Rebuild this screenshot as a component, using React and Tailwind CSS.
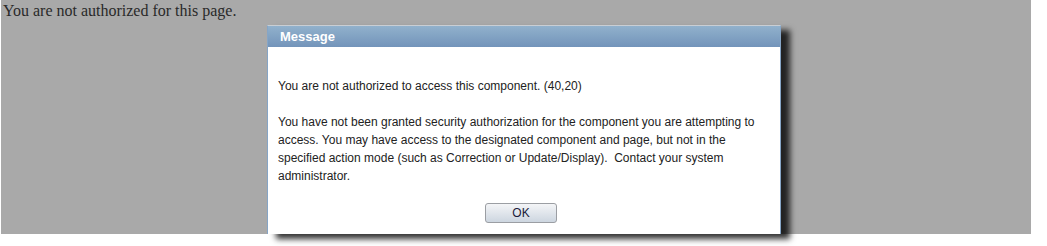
export default function App() {
  return (
    <div className="w-[1047px] h-[246px] bg-white overflow-hidden">
      <div className="relative ml-[1px] w-[1030px] h-[234px] bg-[#a9a9a9]">
        <p
          className="pl-[2px] pt-[2px] text-[16px] leading-[18px] text-[#2a2a2a]"
          style={{ fontFamily: '"Liberation Serif", "Times New Roman", serif' }}
        >
          You are not authorized for this page.
        </p>
        <div
          className="absolute left-[266px] top-[25px] w-[514px] h-[209px] bg-white border-x border-[#86a5c6] border-t border-t-[#c9ced4] shadow-[9px_5px_6px_rgba(0,0,0,0.8)] flex flex-col"
          style={{ fontFamily: '"Liberation Sans", Arial, sans-serif' }}
        >
          <div className="h-[21px] bg-gradient-to-b from-[#91b1cc] to-[#7394ba] pl-[12px] text-white font-bold text-[13px] leading-[21px]">
            Message
          </div>
          <div className="pl-[10px] pt-[30px] text-[12px] leading-[18px] text-[#222]">
            <p>You are not authorized to access this component. (40,20)</p>
            <p className="mt-[18px]">
              You have not been granted security authorization for the component you are attempting to
              <br />
              access. You may have access to the designated component and page, but not in the
              <br />
              specified action mode (such as Correction or Update/Display).&nbsp; Contact your system
              <br />
              administrator.
            </p>
          </div>
          <div className="flex pl-[217px] pt-[18px]">
            <button className="w-[72px] h-[20px] rounded-[3px] border border-[#9b9ea3] bg-gradient-to-b from-[#f4f5f7] to-[#cdd6e0] text-[12px] leading-[18px] text-[#1b1b3b]">
              OK
            </button>
          </div>
        </div>
      </div>
    </div>
  );
}
